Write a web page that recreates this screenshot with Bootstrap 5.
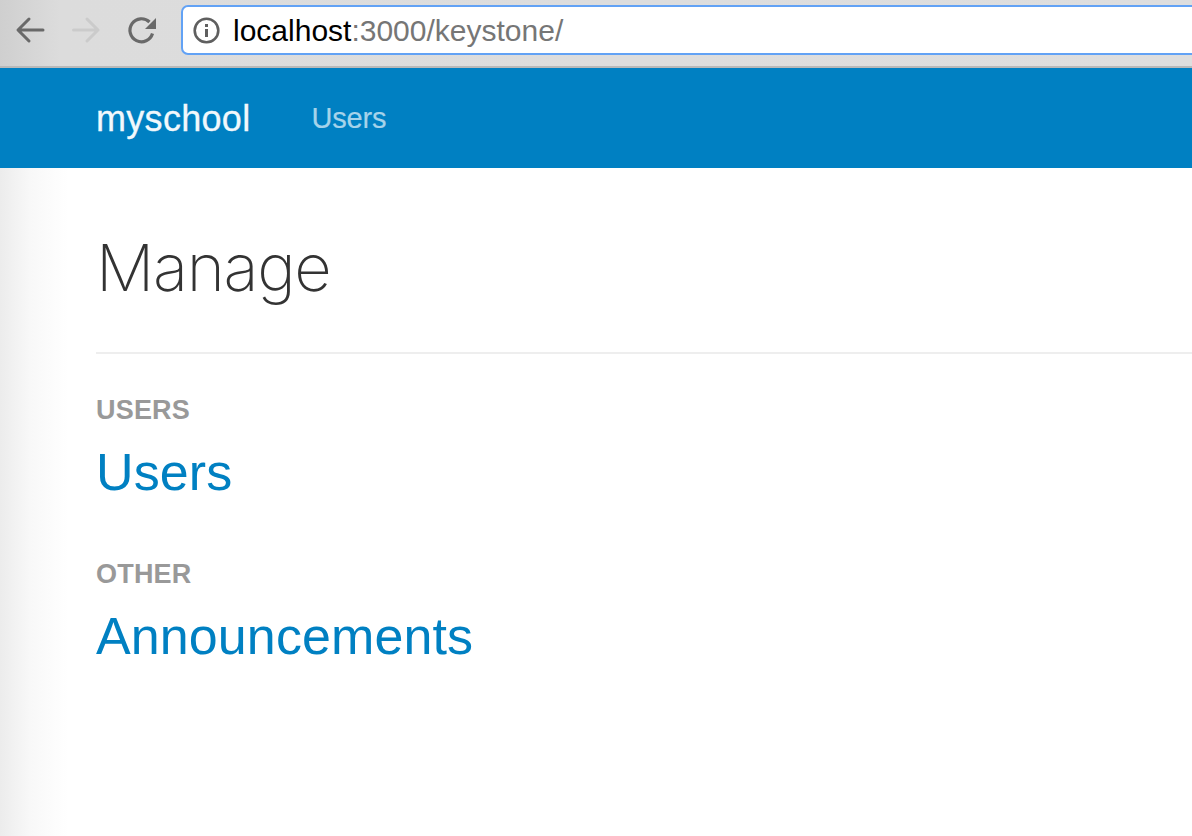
<!DOCTYPE html>
<html lang="en">
<head>
<meta charset="utf-8">
<title>myschool</title>
<link href="https://cdn.jsdelivr.net/npm/bootstrap@5.3.0/dist/css/bootstrap.min.css" rel="stylesheet">
<style>
html, body { height: 100%; }
body { overflow: hidden; font-family: "Liberation Sans", Arial, sans-serif; background: #fff; }
.chrome-bar { height: 68px; background: linear-gradient(90deg, #cfcfcf 0, #dcdcdc 60px, #dedede 100%); border-bottom: 2px solid #b9b9b9; padding: 5px 0 11px 12px; gap: 21px; }
.chrome-btn { width: 36px; height: 36px; flex: none; }
.url-box { flex: 1; margin-left: -2px; margin-right: -20px; background: #fff; border: 2px solid #62a2f5; border-radius: 7px; padding-left: 10px; font-size: 30px; line-height: 1; gap: 13px; }
.url-text { padding-top: 2px; }
.url-host { color: #000; }
.url-rest { color: #767676; }
.top-nav { height: 100px; background: #0080c2; padding: 2px 0 0 96px; }
.top-brand { color: #f1f8fc; font-size: 36px; padding: 0; margin: 0 61px 0 0; letter-spacing: .3px; -webkit-text-stroke: .3px #f1f8fc; }
.top-brand:hover { color: #f1f8fc; }
.top-link { color: #a6d3ea; font-size: 29px; text-decoration: none; letter-spacing: -.2px; -webkit-text-stroke: .2px #a6d3ea; }
.content-wrap { height: 668px; padding-left: 96px; background: linear-gradient(90deg, #ececec 0, #f8f8f8 30px, #fff 68px); }
.page-title { font-family: Inter, sans-serif; font-weight: 200; font-size: 65px; line-height: 1; color: #333; margin: 0; padding-top: 67px; height: 186px; border-bottom: 2px solid #eee; letter-spacing: -1.3px; }
.sect-label { color: #999; font-size: 27px; font-weight: 700; line-height: 30px; margin: 0; letter-spacing: .2px; }
.sect-link { display: block; color: #0080c2; font-size: 52px; line-height: 60px; text-decoration: none; letter-spacing: .1px; }
.sect-one { margin-top: 41px; }
.sect-two { margin-top: 57px; }
.sect-gap { margin-top: 17px; }
</style>
</head>
<body>
<div class="chrome-bar d-flex align-items-center">
  <svg class="chrome-btn" viewBox="0 0 36 36" fill="none" stroke="#696969" stroke-width="3" stroke-linecap="round" stroke-linejoin="round"><path d="M31 18H6.500M17 7 6 18l11 11"/></svg>
  <svg class="chrome-btn" viewBox="0 0 36 36" fill="none" stroke="#cbcbcb" stroke-width="3" stroke-linecap="round" stroke-linejoin="round"><path d="M4.500 18h24.500M18 7l11 11-11 11"/></svg>
  <svg class="chrome-btn" viewBox="0 0 36 36" fill="none"><path d="M26.500 21.500A11.500 11.500 0 1 1 23.500 10" stroke="#696969" stroke-width="3.200"/><path d="M30 6v11H19z" fill="#696969"/></svg>
  <div class="url-box d-flex align-items-center align-self-stretch">
    <svg width="27" height="27" viewBox="0 0 27 27" fill="none" class="flex-shrink-0"><circle cx="13.500" cy="13.500" r="11.800" stroke="#5f5f5f" stroke-width="2.600"/><rect x="12" y="12" width="3" height="8" fill="#5f5f5f"/><rect x="12" y="7" width="3" height="3" fill="#5f5f5f"/></svg>
    <span class="url-text"><span class="url-host">localhost</span><span class="url-rest">:3000/keystone/</span></span>
  </div>
</div>
<nav class="navbar top-nav flex-nowrap justify-content-start">
  <a class="navbar-brand top-brand" href="#">myschool</a>
  <a class="top-link" href="#">Users</a>
</nav>
<main class="content-wrap">
  <h1 class="page-title">Manage</h1>
  <h2 class="sect-label sect-one">USERS</h2>
  <a class="sect-link sect-gap" href="#">Users</a>
  <h2 class="sect-label sect-two">OTHER</h2>
  <a class="sect-link sect-gap" href="#">Announcements</a>
</main>
<script src="https://cdn.jsdelivr.net/npm/bootstrap@5.3.0/dist/js/bootstrap.bundle.min.js"></script>
</body>
</html>
